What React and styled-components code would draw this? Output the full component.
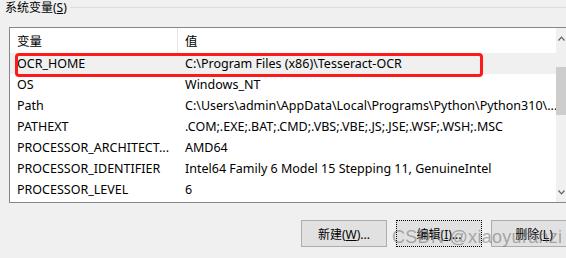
import React from "react";
import styled, { createGlobalStyle } from "styled-components";

const GlobalStyle = createGlobalStyle`
  html, body {
    margin: 0;
    padding: 0;
    background: #f0f0f0;
  }
  body {
    font-family: "Noto Sans", "Noto Sans CJK SC", sans-serif;
    font-size: 12.5px;
    color: #000;
  }
`

const Page = styled.div`
  position: relative;
  width: 566px;
  height: 258px;
  overflow: hidden;
  background: #f0f0f0;
`

const GroupTitle = styled.div`
  display: flex;
  align-items: center;
  height: 14px;
  padding: 1px 0 0 5px;
  gap: 3px;
  line-height: 14px;
  font-size: 12px;

  &::after {
    content: "";
    flex: 1;
    height: 1px;
    background: #dcdcdc;
    margin-top: -1px;
  }
`

const ListBox = styled.div`
  position: relative;
  display: flex;
  margin: 12px 0 0 9px;
  width: 570px;
  height: 174px;
  border: 1px solid #828790;
  background: #fff;
`

const Table = styled.div`
  flex: 0 0 546px;
  display: flex;
  flex-direction: column;
`

const Row = styled.div`
  display: grid;
  grid-template-columns: 168px 1fr;
  height: ${p => (p.$header ? 25 : 21)}px;
  align-items: center;
  background: ${p => (p.$selected ? "#f0f0f0" : "#fff")};
  white-space: nowrap;
`

const Cell = styled.div`
  padding-left: 7px;
  height: 100%;
  display: flex;
  align-items: center;
  overflow: hidden;
  border-right: ${p => (p.$sep ? "1px solid #e5e5e5" : "none")};
`

const Scrollbar = styled.div`
  flex: 0 0 10px;
  display: flex;
  flex-direction: column;
  background: #f0f0f0;
`

const Arrow = styled.div`
  height: 20px;
  display: flex;
  align-items: center;
  justify-content: center;
`

const Track = styled.div`
  flex: 1;
  padding-top: 19px;
`

const Thumb = styled.div`
  height: 48px;
  background: #cdcdcd;
`

const Highlight = styled.div`
  position: absolute;
  left: 5px;
  top: 25px;
  width: 462px;
  height: 18px;
  border: 3px solid #ff1a1a;
  border-radius: 4px;
  pointer-events: none;
`

const ButtonBar = styled.div`
  display: flex;
  gap: 9px;
  padding: 17px 0 0 301px;
`

const Button = styled.div`
  flex: 0 0 auto;
  width: 84px;
  height: 25px;
  box-sizing: content-box;
  display: flex;
  align-items: center;
  justify-content: center;
  background: #e1e1e1;
  border: 1px ${p => (p.$focused ? "dotted #000" : "solid #adadad")};
  font-size: 12px;
  white-space: pre;
`

const Watermark = styled.div`
  position: absolute;
  left: 392px;
  top: 227px;
  font-family: "Liberation Sans", Arial, sans-serif;
  font-size: 18px;
  color: rgba(110, 110, 110, 0.55);
  letter-spacing: 0.3px;
  pointer-events: none;
`

const Chevron = ({ up }) => (
  <svg width="7" height="5" viewBox="0 0 7 5">
    <path
      d={up ? "M0.5 4.5 L3.5 1.2 L6.5 4.5" : "M0.5 0.5 L3.5 3.8 L6.5 0.5"}
      fill="none"
      stroke="#606060"
      strokeWidth="1.2"
    />
  </svg>
)

const rows = [
  ["OCR_HOME", "C:\\Program Files (x86)\\Tesseract-OCR"],
  ["OS", "Windows_NT"],
  ["Path", "C:\\Users\\admin\\AppData\\Local\\Programs\\Python\\Python310\\..."],
  ["PATHEXT", ".COM;.EXE;.BAT;.CMD;.VBS;.VBE;.JS;.JSE;.WSF;.WSH;.MSC"],
  ["PROCESSOR_ARCHITECT...", "AMD64"],
  ["PROCESSOR_IDENTIFIER", "Intel64 Family 6 Model 15 Stepping 11, GenuineIntel"],
  ["PROCESSOR_LEVEL", "6"],
]

const App = () => {
  return (
    <Page>
      <GlobalStyle />
      <GroupTitle>
        <span>系统变量(<u>S</u>)</span>
      </GroupTitle>
      <ListBox>
        <Table>
          <Row $header>
            <Cell $sep>变量</Cell>
            <Cell>值</Cell>
          </Row>
          {rows.map(([name, value], i) => (
            <Row key={name} $selected={i === 0}>
              <Cell>{name}</Cell>
              <Cell>{value}</Cell>
            </Row>
          ))}
        </Table>
        <Scrollbar>
          <Arrow><Chevron up /></Arrow>
          <Track>
            <Thumb />
          </Track>
          <Arrow><Chevron /></Arrow>
        </Scrollbar>
        <Highlight />
      </ListBox>
      <ButtonBar>
        <Button><span>新建(<u>W</u>)...</span></Button>
        <Button $focused><span>编辑(<u>I</u>)...</span></Button>
        <Button><span>删除(<u>L</u>)</span></Button>
      </ButtonBar>
      <Watermark>CSDN @xiaoyuranzi</Watermark>
    </Page>
  )
}

export default App
